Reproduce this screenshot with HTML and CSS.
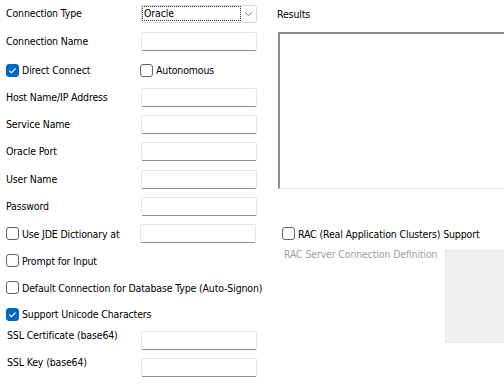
FILE: index.html
```html
<!DOCTYPE html>
<html>
<head>
  <meta charset="UTF-8">
  <title>Connection Settings</title>
  <link rel="stylesheet" href="styles.css">
</head>
<body>
  <div class="window">
    <div class="left">
      <div class="row r27">
        <span class="label">Connection Type</span>
        <div class="combo">
          <span class="combo-text">Oracle</span>
          <svg class="chev" width="9" height="6" viewBox="0 0 9 6"><path d="M1 1.5 L4.5 4.5 L8 1.5" fill="none" stroke="#7a7a7a" stroke-width="1"/></svg>
        </div>
      </div>
      <div class="row r29">
        <span class="label">Connection Name</span>
        <div class="field"></div>
      </div>
      <div class="row r28">
        <label class="check wide"><span class="box on"><svg width="13" height="13" viewBox="0 0 13 13"><path d="M3.3 6.6 L5.4 8.7 L9.7 4.4" fill="none" stroke="#fff" stroke-width="1.1"/></svg></span>Direct Connect</label>
        <label class="check"><span class="box"></span>Autonomous</label>
      </div>
      <div class="row r27">
        <span class="label">Host Name/IP Address</span>
        <div class="field"></div>
      </div>
      <div class="row r27">
        <span class="label">Service Name</span>
        <div class="field"></div>
      </div>
      <div class="row r27">
        <span class="label">Oracle Port</span>
        <div class="field"></div>
      </div>
      <div class="row r28">
        <span class="label">User Name</span>
        <div class="field"></div>
      </div>
      <div class="row r27">
        <span class="label">Password</span>
        <div class="field"></div>
      </div>
      <div class="row r27">
        <label class="check wide"><span class="box"></span>Use JDE Dictionary at</label>
        <div class="field"></div>
      </div>
      <div class="row r27">
        <label class="check"><span class="box"></span>Prompt for Input</label>
      </div>
      <div class="row r27">
        <label class="check"><span class="box"></span>Default Connection for Database Type (Auto-Signon)</label>
      </div>
      <div class="row r26">
        <label class="check"><span class="box on"><svg width="13" height="13" viewBox="0 0 13 13"><path d="M3.3 6.6 L5.4 8.7 L9.7 4.4" fill="none" stroke="#fff" stroke-width="1.1"/></svg></span>Support Unicode Characters</label>
      </div>
      <div class="row r27">
        <span class="label top">SSL Certificate (base64)</span>
        <div class="field"></div>
      </div>
      <div class="row r27">
        <span class="label top">SSL Key (base64)</span>
        <div class="field"></div>
      </div>
    </div>

    <div class="right">
      <div class="row r27">
        <span>Results</span>
      </div>
      <div class="results"></div>
      <div class="row r27 rac">
        <label class="check"><span class="box"></span>RAC (Real Application Clusters) Support</label>
      </div>
      <div class="rac-def">
        <span class="muted">RAC Server Connection Definition</span>
        <div class="rac-box"></div>
      </div>
    </div>
  </div>
</body>
</html>
```

FILE: styles.css
```css
body { margin: 0; background: #fff; overflow: hidden; font-family: "DejaVu Sans Condensed", "DejaVu Sans", sans-serif; font-stretch: condensed; font-size: 10.5px; letter-spacing: -0.15px; color: #000; white-space: nowrap; }
.window { display: grid; grid-template-columns: 277px 260px; width: 504px; height: 385px; overflow: hidden; }
.left { padding-left: 6px; }

.row { display: flex; align-items: center; }
.r26 { height: 26px; }
.r27 { height: 27px; }
.r28 { height: 28px; }
.r29 { height: 29px; }

.label { width: 135px; line-height: 13px; }
.label.top { align-self: flex-start; margin-top: 2px; margin-left: 1px; width: 134px; }

.field { width: 116px; height: 19px; box-sizing: border-box; border: 1px solid #e6e6e6; border-bottom: 1px solid #8e8e8e; border-radius: 2px; background: #fff; }

.combo { width: 116px; height: 18px; box-sizing: border-box; border: 1px solid #d9d9d9; border-radius: 3px; display: flex; align-items: center; padding: 0 3px 0 0; }
.combo-text { width: 99px; height: 15px; box-sizing: border-box; border: 1px dotted #333; line-height: 13px; padding-left: 1px; }
.chev { margin-left: auto; }

.check { display: flex; align-items: center; }
.check.wide { width: 134px; }
.box { width: 13px; height: 13px; box-sizing: border-box; border: 1px solid #616161; border-radius: 3px; background: #fff; margin-right: 3px; display: flex; }
.box.on { background: #0067c0; border-color: #0067c0; }
.box svg { margin: -1px; }

.results { width: 240px; height: 157px; box-sizing: border-box; margin: 5px 0 0 1px; border-top: 2px solid #8c8c8c; border-left: 2px solid #8c8c8c; border-bottom: 1px solid #e3e3e3; }
.rac { margin-top: 31px; padding-left: 5px; }
.rac-def { display: flex; align-items: flex-start; }
.muted { color: #a0a0a0; width: 161px; padding-left: 7px; line-height: 13px; margin-top: 1px; }
.rac-box { width: 70px; height: 93px; margin-top: 3px; background: #f0f0f0; border: 1px solid #e6e6e6; box-sizing: border-box; }
```
